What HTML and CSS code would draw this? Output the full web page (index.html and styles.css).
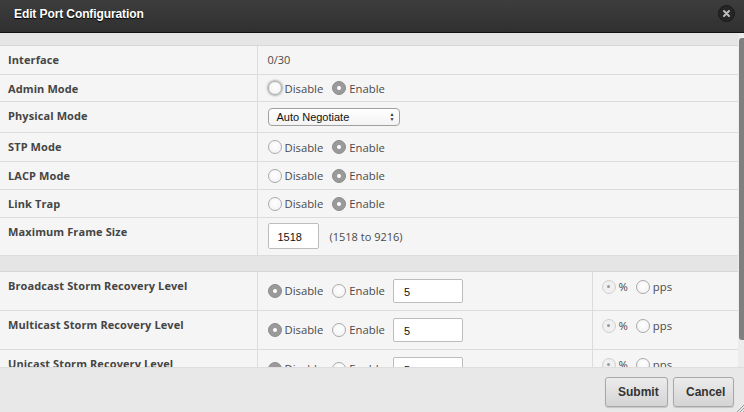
FILE: index.html
```html
<!DOCTYPE html>
<html>
<head>
<meta charset="utf-8">
<link rel="stylesheet" href="styles.css">
</head>
<body>
<div class="dialog">
  <div class="titlebar">
    <span class="title">Edit Port Configuration</span>
    <span class="close"><svg width="17" height="17" viewBox="0 0 17 17"><circle cx="8.5" cy="8.5" r="8" fill="#262626" stroke="#1a1a1a"/><path d="M6 6 L11 11 M11 6 L6 11" stroke="#bdbdbd" stroke-width="2" stroke-linecap="round"/></svg></span>
  </div>
  <div class="content">
    <div class="scroll">
      <div class="band top"></div>
      <table class="grid">
        <colgroup><col class="c1"><col class="c2"><col class="c3"></colgroup>
        <tr class="r28"><td class="lbl">Interface</td><td class="val" colspan="2">0/30</td></tr>
        <tr class="r27"><td class="lbl">Admin Mode</td><td class="val" colspan="2"><span class="radio focus"></span><span class="opt">Disable</span><span class="radio on"></span><span class="opt">Enable</span></td></tr>
        <tr class="r31"><td class="lbl">Physical Mode</td><td class="val" colspan="2"><span class="select">Auto Negotiate<span class="arrows">&#9650;<br>&#9660;</span></span></td></tr>
        <tr class="r29"><td class="lbl">STP Mode</td><td class="val" colspan="2"><span class="radio"></span><span class="opt">Disable</span><span class="radio on"></span><span class="opt">Enable</span></td></tr>
        <tr class="r28"><td class="lbl">LACP Mode</td><td class="val" colspan="2"><span class="radio"></span><span class="opt">Disable</span><span class="radio on"></span><span class="opt">Enable</span></td></tr>
        <tr class="r28"><td class="lbl">Link Trap</td><td class="val" colspan="2"><span class="radio"></span><span class="opt">Disable</span><span class="radio on"></span><span class="opt">Enable</span></td></tr>
        <tr class="r38"><td class="lbl">Maximum Frame Size</td><td class="val" colspan="2"><span class="input w51">1518</span><span class="range">(1518 to 9216)</span></td></tr>
        <tr class="sep"><td colspan="3"></td></tr>
        <tr class="r39"><td class="lbl">Broadcast Storm Recovery Level</td><td class="val"><span class="radio on"></span><span class="opt">Disable</span><span class="radio"></span><span class="opt">Enable</span><span class="input w69">5</span></td><td class="unit"><span class="radio dis"></span><span class="opt">%</span><span class="radio"></span><span class="opt">pps</span></td></tr>
        <tr class="r39"><td class="lbl">Multicast Storm Recovery Level</td><td class="val"><span class="radio on"></span><span class="opt">Disable</span><span class="radio"></span><span class="opt">Enable</span><span class="input w69">5</span></td><td class="unit"><span class="radio dis"></span><span class="opt">%</span><span class="radio"></span><span class="opt">pps</span></td></tr>
        <tr class="r39"><td class="lbl">Unicast Storm Recovery Level</td><td class="val"><span class="radio on"></span><span class="opt">Disable</span><span class="radio"></span><span class="opt">Enable</span><span class="input w69">5</span></td><td class="unit"><span class="radio dis"></span><span class="opt">%</span><span class="radio"></span><span class="opt">pps</span></td></tr>
      </table>
    </div>
    <div class="scrollbar"><div class="thumb"></div></div>
  </div>
  <div class="footer">
    <button class="btn">Submit</button>
    <button class="btn">Cancel</button>
    <svg class="grip" width="8" height="8" viewBox="0 0 8 8"><path d="M8 1 L1 8 M8 4 L4 8 M8 7 L7 8" stroke="#999" stroke-width="1"/></svg>
  </div>
</div>
</body>
</html>
```
FILE: styles.css
```css
html, body { margin: 0; padding: 0; }
body { width: 744px; height: 412px; overflow: hidden; background: #e8e8e8; font-family: "Open Sans", "Liberation Sans", sans-serif; }
.dialog { width: 744px; height: 412px; display: flex; flex-direction: column; position: relative; }
.titlebar { height: 32px; flex: none; background: linear-gradient(#3c3d3c, #2f302f); border-bottom: 1px solid #121212; display: flex; align-items: flex-start; justify-content: space-between; padding: 0 9px 0 14px; box-sizing: content-box; }
.title { font-family: "Liberation Sans", Arial, sans-serif; font-weight: bold; font-size: 12px; color: #fff; margin-top: 7px; text-shadow: 0 1px 1px #000; letter-spacing: -0.1px; }
.close { margin-top: 5px; display: flex; }
.content { flex: 1; display: flex; overflow: hidden; background: #f5f5f5; }
.scroll { flex: 1; overflow: hidden; }
.band { background: #e5e5e5; }
.band.top { height: 12px; border-bottom: 1px solid #d6d6d6; }
.grid { width: 100%; border-collapse: collapse; table-layout: fixed; }
.c1 { width: 257px; }
.c3 { width: 146px; }
.grid td { border-bottom: 1px solid #dcdcdc; padding: 0; font-size: 11px; line-height: 13px; }
.grid td + td { border-left: 1px solid #dcdcdc; }
.lbl { font-weight: bold; color: #454545; padding: 7px 0 0 8px !important; vertical-align: top; letter-spacing: 0.1px; }
.val { color: #4a4a4a; vertical-align: middle; padding-left: 10px !important; white-space: nowrap; }
.unit { vertical-align: top; padding: 7px 0 0 9px !important; color: #4a4a4a; white-space: nowrap; }
.r27 { height: 27px; }
.r28 { height: 28px; }
.r29 { height: 29px; }
.r31 { height: 31px; }
.r38 { height: 38px; }
.r39 { height: 39px; }
.sep td { height: 15px; background: #e5e5e5; border-bottom: 1px solid #d6d6d6; }
.radio { display: inline-block; width: 12px; height: 12px; border-radius: 50%; border: 1px solid #a9a9a9; background: radial-gradient(circle at 50% 40%, #fff, #f0f0f0); vertical-align: middle; position: relative; box-sizing: content-box; margin-top: 0; }
.radio.on { background: #9a9a9a; border-color: #8c8c8c; }
.radio.on::after { content: ""; position: absolute; left: 4px; top: 4px; width: 4px; height: 4px; border-radius: 50%; background: #fff; }
.radio.dis { background: #f0f0f0; border-color: #cfcfcf; }
.radio.dis::after { content: ""; position: absolute; left: 4.5px; top: 4.5px; width: 3px; height: 3px; border-radius: 50%; background: #999; }
.radio.focus { box-shadow: 0 0 2px 1px #b5b5b5; }
.opt { margin: 0 9px 0 3px; font-size: 11.3px; vertical-align: middle; }
.val .opt:nth-child(4) { margin-right: 3px; }
.unit .opt { margin-right: 8px; }
.select { display: inline-flex; align-items: center; justify-content: space-between; width: 118px; height: 16px; border: 1px solid #a0a0a0; border-radius: 4px; background: linear-gradient(#fff, #f3f3f3); font-family: "Liberation Sans", Arial, sans-serif; font-size: 11px; color: #111; padding: 0 4px 0 8px; box-sizing: content-box; margin-top: 1px; vertical-align: middle; }
.arrows { font-size: 5px; line-height: 5px; color: #333; text-align: center; }
.input { display: inline-block; height: 24px; border: 1px solid #bdbdbd; border-radius: 2px; background: #fff; font-family: "Liberation Sans", Arial, sans-serif; font-size: 11px; line-height: 24px; color: #111; padding-left: 9px; box-sizing: border-box; vertical-align: middle; }
.w51 { width: 51px; height: 26px; line-height: 26px; }
.w69 { width: 70px; margin-left: 5px; padding-left: 10px; }
.range { margin-left: 11px; vertical-align: middle; }
.scrollbar { width: 6px; flex: none; background: #ececec; }
.thumb { margin: 5px 0 0 1px; width: 5px; height: 302px; background: #7f7f7f; border-radius: 3px 0 0 3px; }
.footer { height: 45px; flex: none; background: #e8e8e8; border-top: 1px solid #dedede; display: flex; justify-content: flex-end; align-items: flex-start; padding: 9px 10px 0 0; box-sizing: border-box; gap: 5px; position: relative; }
.btn { height: 30px; padding: 0 12px; border: 1px solid #a8a8a8; border-radius: 3px; background: linear-gradient(#ececec, #d4d4d4); font-family: "Liberation Sans", Arial, sans-serif; font-weight: bold; font-size: 12px; color: #333; box-shadow: 0 1px 1px rgba(0,0,0,0.15); }
.btn:first-child { width: 63px; }
.btn:nth-child(2) { width: 61px; }
.grip { position: absolute; right: 0; bottom: 0; }
```
